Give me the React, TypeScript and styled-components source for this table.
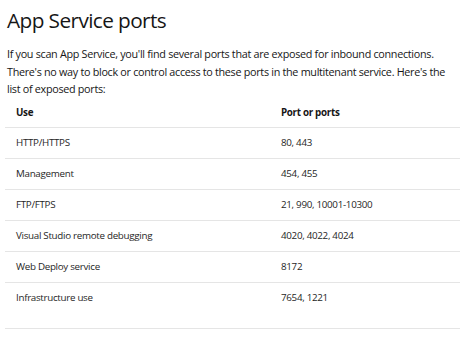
import React from "react";
import styled, { createGlobalStyle } from "styled-components";

const Global = createGlobalStyle`
  html, body { margin: 0; padding: 0; background: #ffffff; }
  body { font-family: "Open Sans", "Noto Sans", sans-serif; color: #161616; }
`;

const Page = styled.main`
  width: 474px;
  height: 348px;
  box-sizing: border-box;
  padding: 4px 10px 0 7px;
  overflow: hidden;
`;

const Title = styled.h1`
  margin: 0;
  font-size: 20.8px;
  font-weight: 400;
  line-height: 32px;
  color: #161616;
  letter-spacing: -0.6px;
`;

const Intro = styled.p`
  margin: 9px 0 0 0;
  max-width: 440px;
  font-size: 10.8px;
  line-height: 17.5px;
  letter-spacing: -0.3px;
  color: #161616;
`;

const TableWrap = styled.div`
  margin: 1px 0 0 -2px;
  width: 455px;
  padding-bottom: 15px;
  border-bottom: 1px solid #e5e5e5;
`;

const Table = styled.table`
  width: 100%;
  border-collapse: collapse;
  font-size: 9.8px;
  letter-spacing: -0.3px;
`;

const HeadCell = styled.th<{ $w?: string }>`
  text-align: left;
  font-weight: 700;
  padding: 0 11px;
  height: 28px;
  border-bottom: 1px solid #e5e5e5;
  width: ${(p) => p.$w ?? "auto"};
  color: #161616;
`;

const Cell = styled.td<{ $last?: boolean }>`
  padding: 0 11px;
  height: 30px;
  border-bottom: ${(p) => (p.$last ? "none" : "1px solid #e5e5e5")};
  color: #262626;
`;

const rows: [string, string][] = [
  ["HTTP/HTTPS", "80, 443"],
  ["Management", "454, 455"],
  ["FTP/FTPS", "21, 990, 10001-10300"],
  ["Visual Studio remote debugging", "4020, 4022, 4024"],
  ["Web Deploy service", "8172"],
  ["Infrastructure use", "7654, 1221"],
];

export default function App() {
  return (
    <>
      <Global />
      <Page>
        <Title>App Service ports</Title>
        <Intro>
          If you scan App Service, you'll find several ports that are exposed for inbound connections.
          There's no way to block or control access to these ports in the multitenant service. Here's the
          list of exposed ports:
        </Intro>
        <TableWrap>
          <Table>
            <thead>
              <tr>
                <HeadCell $w="243px">Use</HeadCell>
                <HeadCell>Port or ports</HeadCell>
              </tr>
            </thead>
            <tbody>
              {rows.map(([use, ports], i) => (
                <tr key={use}>
                  <Cell $last={i === rows.length - 1}>{use}</Cell>
                  <Cell $last={i === rows.length - 1}>{ports}</Cell>
                </tr>
              ))}
            </tbody>
          </Table>
        </TableWrap>
      </Page>
    </>
  );
}
